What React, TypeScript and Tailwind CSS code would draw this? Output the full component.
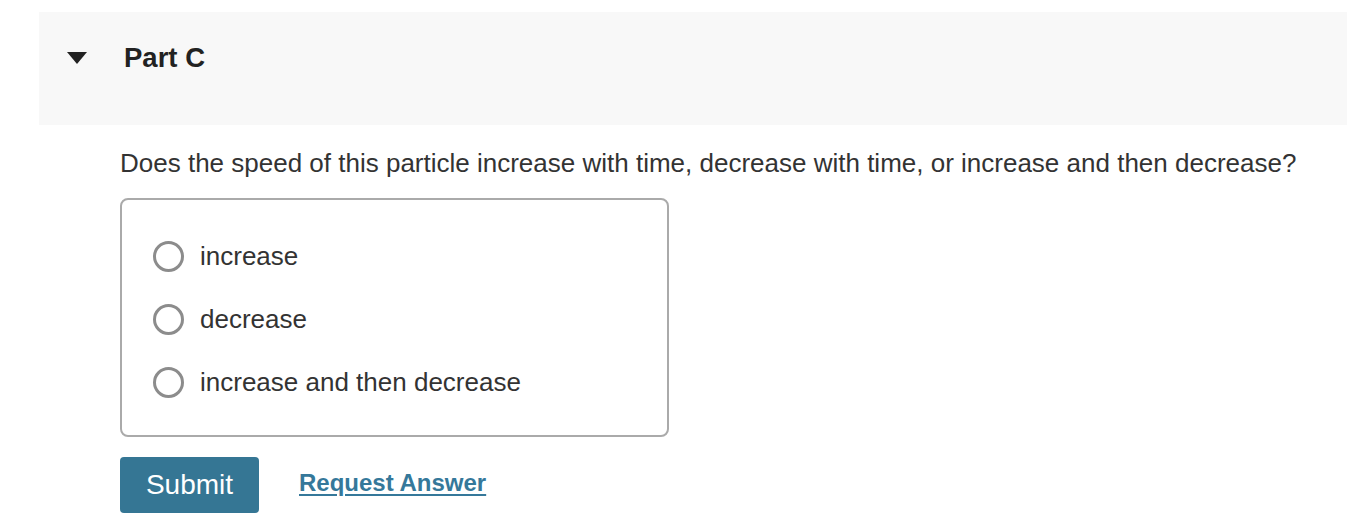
import React from "react";

function Radio({ label }: { label: string }) {
  return (
    <label className="flex items-center h-[63px]">
      <span className="w-[31px] h-[31px] rounded-full border-[3px] border-[#8c8c8c] bg-white shrink-0" />
      <span className="ml-[16px] text-[26px] text-[#333333]">{label}</span>
    </label>
  );
}

export default function App() {
  return (
    <div className="w-[1347px] h-[525px] bg-white font-['Liberation_Sans',Arial,sans-serif] overflow-hidden">
      <div className="pt-[12px] pl-[39px]">
        <div className="h-[113px] bg-[#f8f8f8] flex items-start">
          <svg width="20" height="12" viewBox="0 0 20 12" className="ml-[28px] mt-[40px] shrink-0">
            <polygon points="0,0 20,0 10,12" fill="#222222" />
          </svg>
          <span className="ml-[37px] mt-[29px] text-[27.5px] leading-[34px] font-bold text-[#222222]">Part C</span>
        </div>
      </div>
      <div className="pl-[120px]">
        <p className="mt-[22px] text-[26px] leading-[32px] text-[#333333] whitespace-nowrap">
          Does the speed of this particle increase with time, decrease with time, or increase and then decrease?
        </p>
        <div className="mt-[19px] w-[549px] h-[239px] border-2 border-[#aaaaaa] rounded-[8px] pl-[31px] pt-[25px]">
          <Radio label="increase" />
          <Radio label="decrease" />
          <Radio label="increase and then decrease" />
        </div>
        <div className="mt-[20px] flex items-center">
          <button className="w-[139px] h-[56px] bg-[#357694] rounded-[4px] text-white text-[28px]">Submit</button>
          <a href="#" className="ml-[40px] mt-[-4px] text-[24px] font-bold text-[#35789a] underline underline-offset-[3px] decoration-2">Request Answer</a>
        </div>
      </div>
    </div>
  );
}
